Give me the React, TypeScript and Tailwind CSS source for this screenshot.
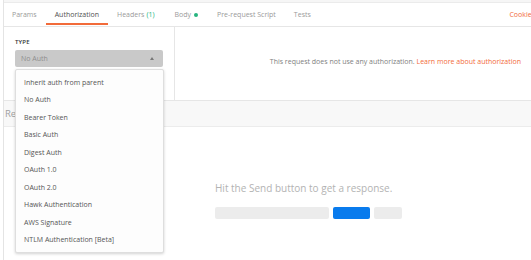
import React from "react";

const items = [
  "Inherit auth from parent",
  "No Auth",
  "Bearer Token",
  "Basic Auth",
  "Digest Auth",
  "OAuth 1.0",
  "OAuth 2.0",
  "Hawk Authentication",
  "AWS Signature",
  "NTLM Authentication [Beta]",
];

export default function App() {
  return (
    <div className="relative w-[531px] h-[260px] overflow-hidden bg-white font-['Open_Sans',sans-serif] text-[7px] leading-none">
      <div className="flex h-full pl-[3px]">
        <div className="flex flex-col flex-1 border-l border-[#e4e4e4]">
          {/* top strip */}
          <div className="h-[3px] bg-[#f6f6f6] border-b border-[#ebebeb]" />
          {/* tabs */}
          <div className="flex items-stretch h-[24px] border-b border-[#e6e6e6] text-[#9a9a9a]">
            <div className="flex items-center px-[8px]">Params</div>
            <div className="relative flex items-center px-[9px] ml-[1px] text-[#505050]">
              Authorization
              <div className="absolute left-0 right-0 bottom-[1px] h-[2px] bg-[#f26b3a]" />
            </div>
            <div className="flex items-center px-[9px]">
              Headers<span className="ml-[2px] text-[#26b47f]">(1)</span>
            </div>
            <div className="flex items-center px-[10px] ml-[1px]">
              Body
              <span className="ml-[3px] w-[4px] h-[4px] rounded-full bg-[#26b47f]" />
            </div>
            <div className="flex items-center px-[9px]">Pre-request Script</div>
            <div className="flex items-center px-[9px]">Tests</div>
            <div className="flex items-center ml-auto -mr-[4px] text-[#f26b3a] whitespace-nowrap">Cookies</div>
          </div>
          {/* auth content */}
          <div className="flex h-[74px] border-b border-[#e6e6e6]">
            <div className="w-[171px] border-r border-[#e6e6e6] pl-[11px] pt-[12px]">
              <div className="text-[6px] font-semibold text-[#333] tracking-[0.2px]">TYPE</div>
              <div className="mt-[5px] w-[148px] h-[17px] rounded-[2px] bg-[#c9c9c9] flex items-center justify-between pl-[6px] pr-[9px] text-[#8e8e8e]">
                <span>No Auth</span>
                <span className="w-0 h-0 border-l-[2.5px] border-r-[2.5px] border-b-[3px] border-l-transparent border-r-transparent border-b-[#777]" />
              </div>
            </div>
            <div className="flex-1 flex justify-end pr-[10px] pt-[31px] text-[#808080] whitespace-nowrap">
              <span>
                This request does not use any authorization.{" "}
                <span className="text-[#f26b3a]">Learn more about authorization</span>
              </span>
            </div>
          </div>
          {/* response bar */}
          <div className="h-[26px] bg-[#f8f8f8] border-b border-[#ececec] flex items-center pl-[1px] text-[9.5px] text-[#a0a0a0]">
            Response
          </div>
          {/* empty response */}
          <div className="flex-1 bg-white pl-[211px] pt-[54px]">
            <div className="text-[10px] leading-[14px] text-[#b3b3b3] whitespace-nowrap">
              Hit the Send button to get a response.
            </div>
            <div className="flex gap-[4px] mt-[12px]">
              <div className="w-[114px] h-[12px] rounded-[2px] bg-[#ececec]" />
              <div className="w-[37px] h-[12px] rounded-[2px] bg-[#097bed]" />
              <div className="w-[28px] h-[12px] rounded-[2px] bg-[#ececec]" />
            </div>
          </div>
        </div>
      </div>
      {/* dropdown */}
      <div className="absolute left-[15px] top-[69px] w-[149px] py-[3.5px] bg-[#fdfdfd] border border-[#dedede] rounded-[2px] shadow-[0_1px_3px_rgba(0,0,0,0.18)]">
        {items.map((t) => (
          <div key={t} className="h-[17.5px] flex items-center pl-[8px] text-[#555]">
            {t}
          </div>
        ))}
      </div>
    </div>
  );
}
